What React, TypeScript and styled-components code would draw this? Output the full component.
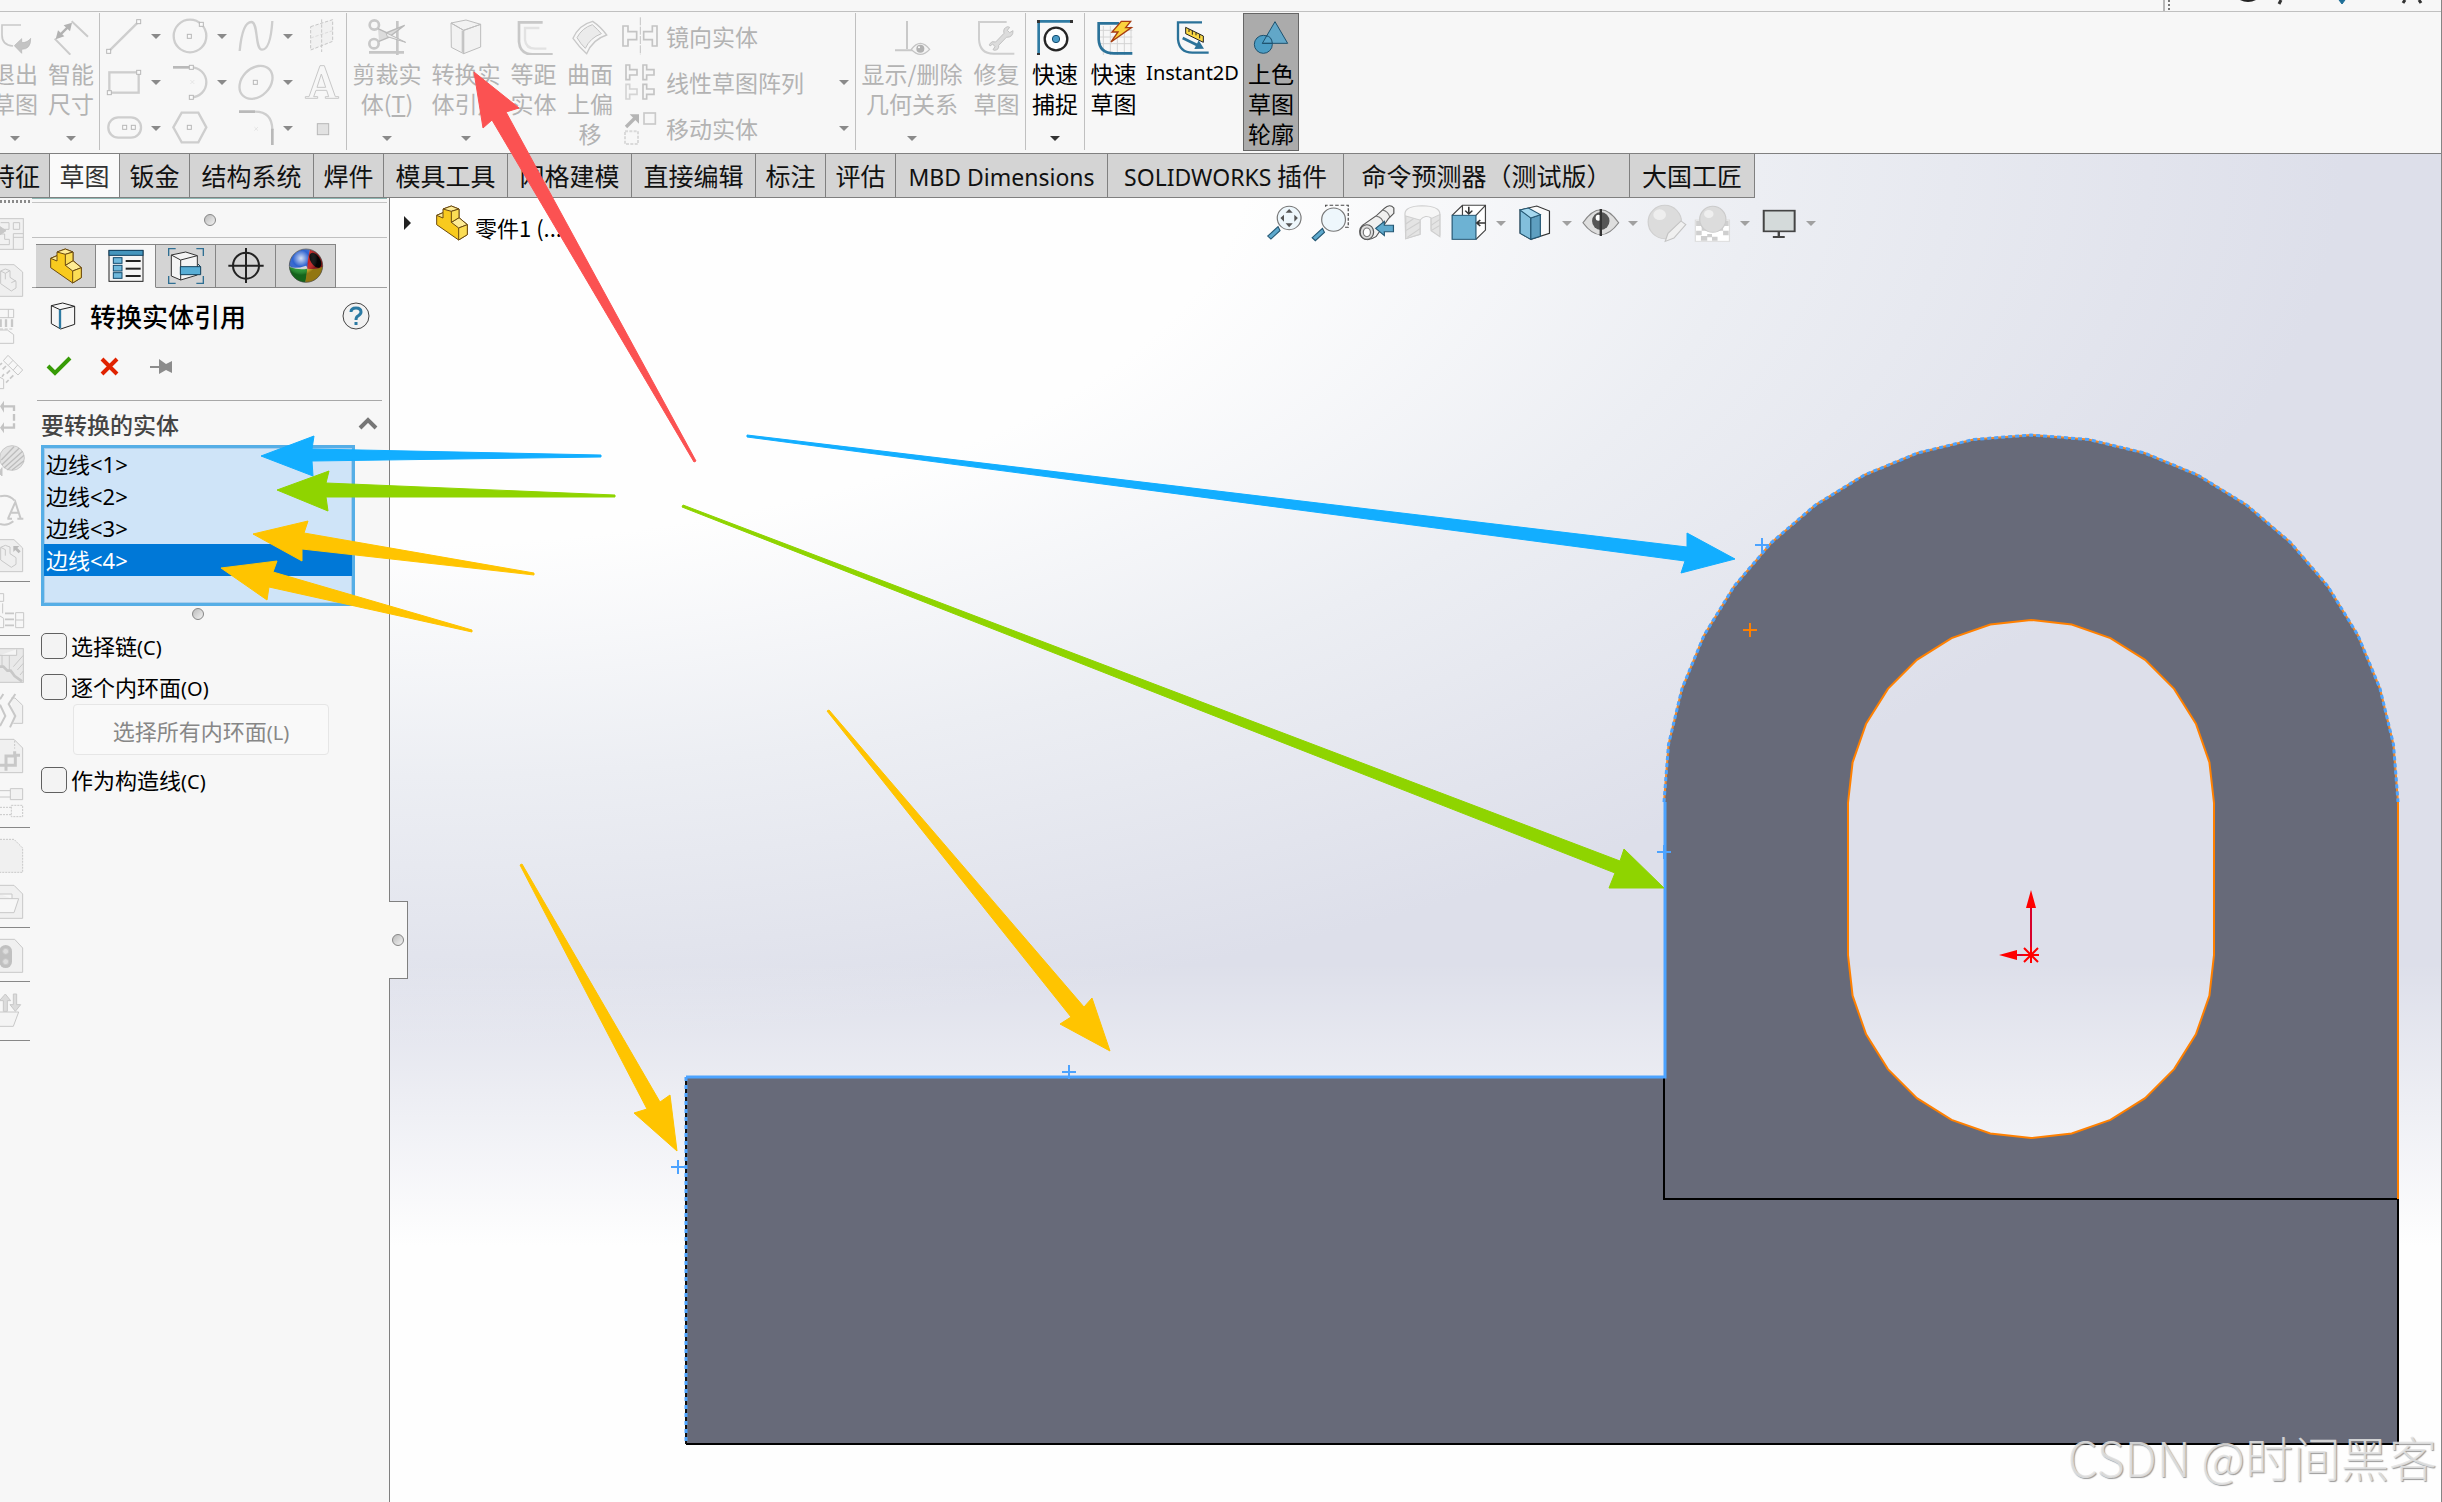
import React from "react";
import styled, { createGlobalStyle, css } from "styled-components";

const sans = `"Noto Sans", "Noto Sans CJK SC", sans-serif`;
const cjk = `"Noto Sans CJK SC", sans-serif`;

const Global = createGlobalStyle`
  *, *::before, *::after { box-sizing: border-box; }
  body { margin: 0; background: #f7f7f7; font-family: ${cjk}; font-size: 22px; color: #000; }
  button { font: inherit; color: inherit; border: 0; padding: 0; background: none; }
  svg { display: block; flex: none; }
`;

const Shell = styled.div`
  position: relative;
  display: flex;
  flex-direction: column;
  min-height: 100vh;
  overflow: hidden;
  border-right: 1px solid #858585;
`;

const TopStrip = styled.div`
  display: flex;
  justify-content: flex-end;
  height: 12px;
  border-bottom: 1px solid #c0c0c0;
`;

const Ribbon = styled.div`
  display: flex;
  height: 142px;
  padding: 1px 0 3px;
  border-bottom: 1px solid #808080;
`;

const Group = styled.div<{ $w?: number; $end?: boolean }>`
  display: flex;
  flex: none;
  ${(p) => p.$w && `width: ${p.$w}px;`}
  ${(p) => p.$end && "justify-content: flex-end;"}
  border-right: 1px solid #c0c0c0;
  &:last-child { border-right: 0; }
`;

const BigButton = styled.button<{ $w: number; $off?: boolean; $on?: boolean }>`
  display: flex;
  flex: none;
  flex-direction: column;
  align-items: center;
  width: ${(p) => p.$w}px;
  height: 138px;
  padding-top: 6px;
  font-size: 23px;
  line-height: 30px;
  color: ${(p) => (p.$off ? "#b3b3b3" : "#000")};
  ${(p) => p.$on && css`background: #ababab; box-shadow: inset 0 0 0 1px #666;`}
`;

const BigLabel = styled.span`
  display: flex;
  flex-direction: column;
  align-items: center;
  margin-top: 3px;
  white-space: nowrap;
`;

const Latin = styled.span<{ $s: number }>`
  font-family: ${sans};
  font-size: ${(p) => p.$s}px;
`;

const Tri = styled.span<{ $c?: string }>`
  flex: none;
  width: 0;
  height: 0;
  border: 5px solid transparent;
  border-top-color: ${(p) => p.$c || "#8a8a8a"};
  border-bottom: 0;
`;

const PushDown = styled.span`
  display: flex;
  margin: auto 0 10px;
`;

const ToolGrid = styled.div`
  display: grid;
  grid-template-columns: 66px 66px 66px 46px;
  grid-auto-rows: 46px;
`;

const ToolCell = styled.button`
  display: flex;
  align-items: center;
  gap: 5px;
`;

const RowList = styled.div`
  display: flex;
  flex: 1;
  flex-direction: column;
`;

const RowButton = styled.button`
  display: flex;
  align-items: center;
  height: 46px;
  padding-right: 6px;
  font-size: 23px;
  color: #b3b3b3;
`;
const RowText = styled.span`
  margin: 0 auto 0 2px;
  white-space: nowrap;
`;

const Workspace = styled.div`
  position: relative;
  display: flex;
  flex: 1;
  flex-direction: column;
  background:
    linear-gradient(to bottom, rgba(255, 255, 255, 0) 60%, #fefefe 81%),
    radial-gradient(ellipse 80% 66% at 16% 0, #fefefe 44%, #eceef3 70%, #dddfea 100%);
`;

const TabBar = styled.div`
  position: relative;
  display: flex;
  height: 44px;
`;

const Tab = styled.button<{ $w: number; $on?: boolean }>`
  flex: none;
  width: ${(p) => p.$w}px;
  font-size: 25px;
  line-height: 43px;
  white-space: nowrap;
  color: ${(p) => (p.$on ? "#333" : "#111")};
  background: ${(p) => (p.$on ? "#fafafa" : "#d4d4d4")};
  border-right: 1px solid #808080;
  border-bottom: 1px solid #808080;
  &:first-child { display: flex; justify-content: flex-end; padding-right: 9px; overflow: hidden; }
`;

const Body = styled.div`
  position: relative;
  display: flex;
  flex: 1;
`;

const Strip = styled.div`
  flex: none;
  width: 32px;
  background: #f7f7f7;
`;
const StripHandle = styled.div`
  height: 14px;
  padding-top: 2px;
  &::before {
    content: "";
    display: block;
    width: 30px;
    height: 3px;
    background: repeating-linear-gradient(90deg, #8a8a8a 0 2px, transparent 2px 4px);
  }
`;
const StripButton = styled.button`
  display: block;
  height: 46px;
`;
const StripRule = styled.hr<{ $top?: number }>`
  width: 30px;
  height: 1px;
  margin: ${(p) => p.$top || 1}px 0 6px;
  border: 0;
  background: #888;
`;

const Panel = styled.aside`
  position: relative;
  flex: none;
  width: 358px;
  background: #f7f7f7;
  border-right: 1px solid #808080;
`;

const Grip = styled.div`
  display: flex;
  flex-direction: column;
  align-items: center;
  height: 40px;
  margin-right: 2px;
  border-top: 1px solid #8fb8b4;
  border-bottom: 1px solid #c0c0c0;
  &::before {
    content: "";
    width: 100%;
    margin: 3px 0 11px;
    border-top: 1px solid #c4c4c4;
  }
`;

const Ball = styled.span`
  flex: none;
  width: 12px;
  height: 12px;
  border: 1px solid #858585;
  border-radius: 50%;
  background: linear-gradient(135deg, #bbb, #f2f2f2);
`;

const PanelTabs = styled.div`
  display: flex;
  height: 44px;
  margin: 6px 2px 0 0;
  &::before { content: ""; width: 4px; border-bottom: 1px solid #a0a0a0; }
  &::after { content: ""; flex: 1; border-bottom: 1px solid #a0a0a0; }
`;
const PanelTab = styled.button<{ $on?: boolean }>`
  display: flex;
  justify-content: center;
  align-items: center;
  width: 60px;
  background: ${(p) => (p.$on ? "#f7f7f7" : "#d4d4d4")};
  border: 1px solid #858585;
  border-left: 0;
  ${(p) => p.$on && "border-bottom-color: #f7f7f7;"}
`;

const TitleRow = styled.header`
  display: flex;
  align-items: center;
  height: 56px;
  padding: 0 19px 0 18px;
`;
const Title = styled.h2`
  flex: 1;
  margin: 0 0 0 13px;
  font-size: 26px;
  font-weight: 500;
  line-height: 40px;
`;

const Actions = styled.div`
  display: flex;
  gap: 21px;
  height: 46px;
  padding-left: 12px;
  align-items: center;
`;

const Rule = styled.hr`
  height: 1px;
  margin: 10px 7px 0 5px;
  border: 0;
  background: #a8a8a8;
`;

const SectionHead = styled.button`
  display: flex;
  justify-content: space-between;
  align-items: center;
  width: 100%;
  height: 44px;
  padding: 1px 11px 0 9px;
  font-size: 23px;
  font-weight: 500;
  color: #444;
`;

const List = styled.ul`
  min-height: 161px;
  margin: 0 34px 0 9px;
  padding: 0;
  list-style: none;
  background: #cfe4f8;
  border: 3px solid #56aee6;
  box-shadow: inset 0 0 0 1px #a7cdec;
`;
const Item = styled.li<{ $on?: boolean }>`
  height: 32px;
  padding-left: 2px;
  font-family: ${sans};
  line-height: 32px;
  ${(p) => p.$on && "background: #0078d7; color: #fff;"}
`;

const BallRow = styled.div`
  display: flex;
  justify-content: center;
  align-items: center;
  height: 16px;
  margin: 0 34px 11px 9px;
`;

const Check = styled.label`
  display: flex;
  align-items: center;
  gap: 4px;
  height: 26px;
  margin: 0 0 15px 9px;
  line-height: 26px;
  white-space: nowrap;
`;
const Box = styled.input`
  appearance: none;
  width: 26px;
  height: 26px;
  margin: 0;
  border: 1px solid #606060;
  border-radius: 5px;
  background: #f3f3f3;
`;
const LoopButton = styled.button`
  display: block;
  width: 256px;
  height: 51px;
  margin: -11px 0 12px 41px;
  color: #878787;
  background: #f9f9f9;
  border: 1px solid #e6e6e6;
  border-radius: 4px;
`;

const Collapse = styled.button`
  position: absolute;
  top: 703px;
  left: 357px;
  display: flex;
  justify-content: center;
  align-items: center;
  width: 19px;
  height: 78px;
  background: #f7f7f7;
  border: 1px solid #808080;
  border-left: 0;
`;

const Viewport = styled.main`
  flex: 1;
  min-width: 0;
`;
const ViewBar = styled.div`
  display: grid;
  grid-template-columns: 871px 1fr;
  height: 50px;
`;
const Tree = styled.button`
  display: flex;
  align-items: center;
  padding-left: 14px;
  font-size: 22px;
  white-space: pre;
  & > svg:nth-child(2) { margin: 0 5px 0 22px; }
`;
const TreeText = styled.span`
  padding-top: 8px;
`;
const HeadsUp = styled.div`
  display: flex;
  align-items: center;
`;
const HeadsButton = styled.button`
  display: flex;
  align-items: center;
  height: 46px;
`;
const HeadsTri = styled.span`
  display: flex;
  justify-content: center;
  width: 20px;
`;

const ModelLayer = styled.svg`
  position: absolute;
  inset: 0;
  width: 100%;
  height: 100%;
  pointer-events: none;
`;
const MarkLayer = styled.svg`
  position: absolute;
  inset: 0;
  width: 100%;
  height: 100%;
  pointer-events: none;
`;

const Watermark = styled.div`
  position: absolute;
  right: 4px;
  bottom: 11px;
  font-size: 48px;
  font-weight: 300;
  line-height: 70px;
  white-space: nowrap;
  color: rgba(228, 228, 228, 0.85);
  text-shadow: 1px 1px 1px rgba(130, 130, 130, 0.8);
`;

/* ---------- ribbon drawings ---------- */

type P = { children: React.ReactNode };
const Big = ({ x, children }: P & { x: number }) => (
  <svg width="40" height="36" viewBox={`${x} 57 120 108`} fill="none" stroke="#cbcbcb" strokeWidth="7">
    {children}
  </svg>
);
const Cell = ({ x, y, children }: P & { x: number; y: number }) => (
  <svg width="46" height="46" viewBox={`${x} ${y} 138 138`} fill="none" stroke="#cecece" strokeWidth="7">
    {children}
  </svg>
);
const Dot = ({ x, y }: { x: number; y: number }) => (
  <rect x={x - 6} y={y - 6} width="12" height="12" fill="#fafafa" stroke="#b8b8b8" strokeWidth="3" />
);
const Lines = ({ of }: { of: React.ReactNode[] }) => (
  <BigLabel>
    {of.map((line, i) => (
      <span key={i}>{line}</span>
    ))}
  </BigLabel>
);

const sketchTools: { name: string; tri: boolean; art: React.ReactNode }[] = [
  { name: "直线", tri: true, art: <><path d="M326 154L416 65" /><Dot x={326} y={154} /><Dot x={416} y={65} /></> },
  { name: "圆", tri: true, art: <><circle cx="570" cy="108" r="49" /><Dot x={568} y={109} /><Dot x={604} y={73} /></> },
  { name: "样条曲线", tri: true, art: <path d="M719 153C724 100 734 66 754 66C776 66 764 149 786 149C806 149 814 110 817 63" /> },
  {
    name: "基准面", tri: false,
    art: <g stroke="#c6c6c6" strokeWidth="3" strokeDasharray="10 5"><path d="M932 80L998 59V124L932 150Z" fill="#f1f1f1" /><path d="M932 114L998 92" stroke="#dcdcdc" /><path d="M965 58V156" /></g>,
  },
  { name: "矩形", tri: true, art: <><rect x="328" y="217" width="88" height="61" /><Dot x={328} y={278} /><Dot x={416} y={217} /></> },
  {
    name: "圆弧", tri: true,
    art: <><path d="M519 202H574" stroke="#b9b9b9" strokeWidth="8" /><path d="M574 202A45 45 0 0 1 574 292" /><Dot x={574} y={202} /><Dot x={574} y={292} /><path d="M571 240l12 12m0-12l-12 12" stroke="#dcdcdc" strokeWidth="2" /></>,
  },
  { name: "椭圆", tri: true, art: <><ellipse cx="768" cy="247" rx="56" ry="42" transform="rotate(-45 768 247)" /><Dot x={766} y={247} /></> },
  {
    name: "文字", tri: false,
    art: <path d="M960 197H973L1006 290H1016V295H976V290H986L980 271H948L941 290H953V295H916V290H927ZM964 222L951 262H977Z" stroke="#c8c8c8" strokeWidth="3" />,
  },
  { name: "槽口", tri: true, art: <><rect x="325" y="352" width="98" height="61" rx="30" /><Dot x={374} y={382} /><Dot x={400} y={382} /></> },
  { name: "多边形", tri: false, art: <><path d="M545 338H595L619 382L595 427H545L520 382Z" /><Dot x={568} y={382} /></> },
  {
    name: "圆角", tri: true,
    art: <><path d="M765 335C798 335 817 352 817 390" /><path d="M717 335H765M817 386V435" stroke="#b9b9b9" strokeWidth="8" /><path d="M763 381l11 11m0-11l-11 11" stroke="#dcdcdc" strokeWidth="2" /></>,
  },
  { name: "点", tri: false, art: <rect x="952" y="371" width="34" height="33" fill="#e2e2e2" stroke="#b8b8b8" strokeWidth="3" /> },
];

const rowTools = [
  {
    label: "镜向实体", tri: false,
    art: <g stroke="#c4c4c4" strokeWidth="5"><path d="M849 78H864V95H890V119H864V138H849ZM951 78H937V95H911V119H937V138H951Z" /><path d="M901 52V165" strokeWidth="3" strokeDasharray="24 4" /></g>,
  },
  {
    label: "线性草图阵列", tri: true,
    art: <g strokeWidth="5">{[[858, 195, "#c4c4c4"], [909, 195, "#c4c4c4"], [858, 253, "#d4d4d4"], [909, 253, "#c4c4c4"]].map(([x, y, c]) => (
      <path key={`${x}${y}`} stroke={c as string} d={`M${x} ${y}h11v14h22v16h-22v14h-11z`} />))}</g>,
  },
  {
    label: "移动实体", tri: true,
    art: <><path d="M858 381L885 354" stroke="#b5b5b5" strokeWidth="10" /><path d="M869 343H897V371Z" fill="#b5b5b5" stroke="none" /><rect x="912" y="339" width="34" height="33" stroke="#cacaca" strokeWidth="5" /><rect x="855" y="394" width="39" height="38" stroke="#dadada" strokeWidth="6" strokeDasharray="9 4" /></>,
  },
];

const iconExit = <Big x={-18}><path d="M60 75H3V105Q3 136 36 138" stroke="#c9c9c9" strokeWidth="5" /><path d="M40 137L62 116V128Q80 128 89 115Q90 148 62 148V160Z" fill="#c4c4c4" stroke="#b5b5b5" strokeWidth="2" /></Big>;
const iconSmart = <Big x={150}><path d="M212 64L261 110M161 116L208 164" strokeWidth="6" /><path d="M172 110L205 77" stroke="#b2b2b2" strokeWidth="7" /><path d="M213 68L207 94L188 76ZM164 118L171 91L190 109Z" fill="#b2b2b2" stroke="none" /></Big>;
const iconTrim = <Big x={81}><path d="M87 157H192M172 63V168" stroke="#c6c6c6" strokeWidth="8" /><circle cx="103" cy="75" r="14" strokeWidth="8" stroke="#c8c8c8" /><circle cx="102" cy="131" r="14" strokeWidth="8" stroke="#c8c8c8" /><path d="M114 86L140 98L194 76L146 112L117 124" stroke="#b9b9b9" strokeWidth="4" fill="#dcdcdc" /><path d="M138 98L197 127L142 110Z" fill="#eee" stroke="#b9b9b9" strokeWidth="3" /></Big>;
const iconConvert = <Big x={318}><path d="M333 69L378 60L422 73L371 91ZM333 69L371 91V161L334 142ZM371 91L422 73V141L371 161Z" fill="#f2f2f2" stroke="#bdbdbd" strokeWidth="3" /><path d="M368 92V158" stroke="#c6c6c6" strokeWidth="6" /></Big>;
const iconOffset = <Big x={520}><path d="M606 67H535V125Q538 163 575 163H636" strokeWidth="8" stroke="#c8c8c8" /><path d="M596 84H553V120Q556 146 584 146H617" strokeWidth="7" stroke="#e2e2e2" /></Big>;
const iconSurface = <Big x={690}><path d="M699 115Q717 74 758 64Q782 80 800 105Q758 118 740 161Q718 142 699 115Z" stroke="#c8c8c8" strokeWidth="4" /><path d="M711 113Q726 84 757 74Q773 88 784 101Q750 114 736 145Q722 132 711 113Z" fill="#ebebeb" stroke="#c2c2c2" strokeWidth="3" /></Big>;
const iconRelations = <Big x={126}><path d="M171 63V147M135 151H190" stroke="#c9c9c9" strokeWidth="6" /><path d="M184 148Q211 112 239 148Q211 178 184 148Z" fill="#f4f4f4" stroke="#c4c4c4" strokeWidth="4" /><circle cx="211" cy="146" r="12" fill="#b2b2b2" stroke="none" /><circle cx="207" cy="142" r="3" fill="#fff" stroke="none" /></Big>;
const iconRepair = <Big x={380}><path d="M469 66H386V118Q388 161 430 161H492" strokeWidth="6" stroke="#cfcfcf" /><path d="M417 133Q424 121 436 126L461 100Q457 84 472 80L478 82L471 91L478 98L488 92Q489 112 468 112L445 136Q447 149 433 151L428 149L434 140L427 132L419 138Z" fill="#dcdcdc" stroke="#c2c2c2" strokeWidth="3" /></Big>;
const iconSnap = <Big x={555}><path d="M561 64H662M566 68V160" stroke="#2f7ba3" strokeWidth="8" /><path d="M561 60h9v9h-9zM660 60h9v9h-9zM561 159h9v8h-9z" fill="#333" stroke="none" /><circle cx="618" cy="117" r="34" stroke="#262626" fill="#fff" /><circle cx="618" cy="117" r="11" fill="#4b9cc7" stroke="#174e70" strokeWidth="3" /></Big>;
const iconQuick = <Big x={730}><path d="M758 78V165M779 78V165M800 78V165M821 78V165M841 78V165M742 91H845M742 111H845M742 131H845" stroke="#d4d4d4" strokeWidth="3" /><path d="M805 70H744V118Q746 160 790 160H845" stroke="#2b7299" strokeWidth="8" /><path d="M812 64H840L825 83H842L781 126L802 96H784Z" fill="#fbd23d" stroke="#a63c10" strokeWidth="4" /></Big>;
const iconInstant = <Big x={966}><path d="M1053 67H981V118Q985 157 1024 158H1073" stroke="#2b7299" strokeWidth="7" /><path d="M1004 82L1057 108V127L1004 101Z" fill="#fbd943" stroke="#222" strokeWidth="3" /><path d="M1014 88V96M1024 92V104M1035 98V106M1046 103V115" stroke="#222" strokeWidth="3" /><path d="M995 114L1038 135" stroke="#2b7299" strokeWidth="8" /><path d="M1043 121L1059 146L1030 147Z" fill="#2b7299" stroke="none" /></Big>;
const iconShaded = <Big x={1203}><circle cx="1240" cy="133" r="27" fill="#4c9dc4" stroke="#1d516e" strokeWidth="3" /><path d="M1275 65L1313 130H1237Z" fill="#5aa6cb" fillOpacity=".9" stroke="#1d516e" strokeWidth="3" /><path d="M1237 130H1267Q1265 108 1247 107" stroke="#1d516e" strokeWidth="3" /></Big>;

/* ---------- side strip drawings ---------- */

const StripIcon = ({ y, children }: P & { y: number }) => (
  <StripButton aria-label="工具">
    <svg width="30" height="46" viewBox={`0 ${y} 90 138`} fill="none" stroke="#c8c8c8" strokeWidth="3">{children}</svg>
  </StripButton>
);
const stepPart = "l14 -6l14 5v20l18 12v20l-14 9l-32 -22z";

function SideStrip() {
  return (
    <Strip>
      <StripHandle />
      <StripIcon y={66}><rect x="-20" y="86" width="90" height="92" fill="#f1f1f1" /><path d="M2 98H27V118H2M40 98H59V118H40ZM40 178V131H70M40 142H70M0 132H14V148H28V164H0" /><path d="M0 110L18 122L0 134Z" fill="#c8c8c8" /></StripIcon>
      <StripIcon y={204}><path d="M0 224H42L68 246V319H0" fill="#efefef" /><path d={`M2 243${stepPart}M2 243l14 7v18M16 250l14 -8M34 278l14 -6`} /></StripIcon>
      <StripIcon y={342}><path d="M0 358H41V383H0M25 358V383M0 420H22L41 434V460H0" /><path d="M2 388V411M18 388V411M36 388V411" strokeWidth="7" /><path d="M0 417H41" strokeDasharray="9 5" /></StripIcon>
      <StripIcon y={480}><path d="M24 496L68 540L54 555L10 512ZM39 511L25 526M53 525L40 540M0 562L11 568V596H0" /><path d="M0 525L6 519M8 538L18 528M20 551L30 541M30 566L40 556M6 560L12 552M18 578L26 570" strokeWidth="5" /></StripIcon>
      <StripIcon y={618}><path d="M8 649H42V663M42 672V692M42 700V713H8" strokeWidth="7" stroke="#c4c4c4" /><path d="M0 649L12 632V668ZM0 713L12 697V730Z" fill="#c4c4c4" stroke="none" /></StripIcon>
      <StripIcon y={126}><circle cx="36" cy="174" r="37" fill="#e2e2e2" /><path d="M4 180L42 140M6 194L58 144M12 204L68 154M22 210L72 166M36 210L72 182" stroke="#bdbdbd" strokeWidth="4" /><path d="M0 212L6 203V228L0 222Z" fill="#c4c4c4" /></StripIcon>
      <StripIcon y={264}><path d="M0 289A43 43 0 0 1 44 302M0 372A43 43 0 0 0 40 364" strokeWidth="6" /><path d="M22 356H36M24 356L46 306L62 356M52 356H70M32 338H56" strokeWidth="6" /></StripIcon>
      <StripIcon y={402}><path d="M0 419H42L68 444V515H0" fill="#efefef" /><path d={`M2 442${stepPart}M2 442l14 7v18`} /><path d="M40 438H58L52 444L62 454L56 460L46 450L40 456Z" fill="#bbb" stroke="none" /></StripIcon>
      <StripRule />
      <StripIcon y={564}><path d="M0 581H11V604H0M8 610V640" /><path d="M15 640H42M15 658H42M15 676H42" strokeWidth="5" /><path d="M47 638H71V683H47ZM47 660H71M0 648L11 655V683H0" /></StripIcon>
      <StripRule />
      <StripIcon y={66}><rect x="-20" y="86" width="90" height="101" fill="#e9e9e9" /><path d="M0 106H50V88M6 106V142M28 106V150" fill="#f5f5f5" /><path d="M0 140H10L22 152H32L44 168L66 184" strokeWidth="8" /><path d="M40 140L70 106M52 150L70 130M60 165L70 153" /></StripIcon>
      <StripIcon y={204}><path d="M34 234L45 234L68 256V310H40" fill="#f1f1f1" /><path d="M0 238L10 222M0 254L16 288L0 318M46 222L26 252L46 288L30 322" strokeWidth="6" /></StripIcon>
      <StripIcon y={342}><path d="M0 358H42L68 384V458H0" fill="#f0f0f0" /><path d="M0 436H46V406H60M18 452V408H44V394M18 436V452" strokeWidth="9" /><path d="M44 362V386" strokeDasharray="6 4" /></StripIcon>
      <StripIcon y={480}><path d="M31 506H68V539H31ZM0 512H31M0 531H31" fill="#f2f2f2" /><path d="M34 556H68V590H34ZM0 562H34M0 584H34" strokeDasharray="6 3" /></StripIcon>
      <StripRule />
      <StripIcon y={642}><path d="M0 658H42L68 684V757H0" fill="#f0f0f0" strokeDasharray="6 3" /></StripIcon>
      <StripIcon y={780}><path d="M0 796H42L68 822V895H0" fill="#f0f0f0" /><path d="M0 822H36V836M0 836H56L42 878H0" fill="#f7f7f7" /></StripIcon>
      <StripRule />
      <StripIcon y={942}><path d="M0 958H44L68 984V1057H0" fill="#f0f0f0" /><rect x="-2" y="975" width="38" height="69" rx="19" fill="#c0c0c0" stroke="none" /><circle cx="17" cy="994" r="9" fill="#ddd" /><circle cx="17" cy="1025" r="9" fill="#ddd" /></StripIcon>
      <StripRule />
      <StripIcon y={1104}><path d="M0 1140L16 1122L32 1142H22V1174H10V1142H0M40 1122H50V1154H62L46 1174L30 1154H40Z" fill="#dcdcdc" /><path d="M0 1176H56L40 1219H0" fill="#f4f4f4" /></StripIcon>
      <StripRule $top={6} />
    </Strip>
  );
}

/* ---------- panel drawings ---------- */

const PartIcon = () => (
  <svg width="36" height="36" viewBox="145 174 108 108" stroke="#6b4a12" strokeWidth="3" strokeLinejoin="round">
    <path d="M153 205L172 197V186L197 177L220 186V212L245 233V263L219 279L153 233Z" fill="#f8ca1e" />
    <path d="M172 186L197 177L220 186L197 193Z M197 226L220 212L245 233L219 243Z M153 205L172 197V213Z" fill="#fdeb94" />
    <path d="M197 193L220 186V212L197 226ZM219 243L245 233V263L219 279Z" fill="#fbdd55" />
  </svg>
);
const PropIcon = () => (
  <svg width="36" height="36" viewBox="322 174 108 108">
    <rect x="325" y="182" width="102" height="92" fill="#f4f4f4" stroke="#222" strokeWidth="3" />
    <rect x="325" y="181" width="102" height="15" fill="#4495bd" stroke="#0f3f5f" strokeWidth="3" />
    {[203, 226, 248].map((y) => (
      <g key={y}><rect x="338" y={y} width="26" height="17" fill="#6fb8db" stroke="#124a6d" strokeWidth="3" /><path d={`M375 ${y + 10}H420`} stroke="#222" strokeWidth="6" /></g>
    ))}
  </svg>
);
const ConfigIcon = () => (
  <svg width="36" height="36" viewBox="504 174 108 108" fill="none" stroke="#2f6f93" strokeWidth="4">
    <path d="M506 198V176H527M589 176H610V198M506 258V280H527M589 280H610V258" />
    <path d="M514 195L557 186L592 197V255L542 270L514 258Z" fill="#f4f4f4" stroke="#333" strokeWidth="3" />
    <path d="M514 195L542 210L592 197M542 210V270" stroke="#333" strokeWidth="3" />
    <path d="M541 230H602V254H541ZM594 222L602 230" fill="#58aed6" stroke="#11405c" strokeWidth="3" />
  </svg>
);
const TargetIcon = () => (
  <svg width="36" height="36" viewBox="684 174 108 108" fill="none" stroke="#222" strokeWidth="6">
    <circle cx="738" cy="227" r="39" /><path d="M738 174V279M685 227H791" />
  </svg>
);
const AppearIcon = () => (
  <svg width="36" height="36" viewBox="865 174 108 108">
    <defs><radialGradient id="sphere" cx="35%" cy="28%"><stop offset="0" stopColor="#fff" stopOpacity=".8" /><stop offset=".5" stopColor="#fff" stopOpacity="0" /><stop offset="1" stopColor="#000" stopOpacity=".35" /></radialGradient></defs>
    <path d="M919 227Q880 240 869 227A50 50 0 0 1 931 179Q925 205 925 235Z" fill="#2d62cf" />
    <path d="M869 231Q900 242 923 236Q922 260 917 277A50 50 0 0 1 869 231Z" fill="#1e9a2a" />
    <path d="M923 236Q950 240 969 228A50 50 0 0 1 917 277Z" fill="#e0b51a" />
    <path d="M931 179A50 50 0 0 1 969 230Q950 240 923 236Q923 205 931 179Z" fill="#c81e1e" />
    <ellipse cx="947" cy="211" rx="14" ry="25" transform="rotate(-32 947 211)" fill="#080808" />
    <circle cx="919" cy="227" r="50" fill="url(#sphere)" stroke="#444" strokeWidth="2" />
  </svg>
);

/* ---------- view toolbar ---------- */

const Lens = ({ cx, cy }: { cx: number; cy: number }) => (
  <>
    <path d={`M${cx - 28} ${cy + 26}L${cx - 54} ${cy + 54}L${cx - 46} ${cy + 63}L${cx - 23} ${cy + 38}Z`} fill="#5ea9cd" stroke="#245773" />
    <ellipse cx={cx} cy={cy} rx="30" ry="35" fill="#eef7fc" stroke="#777" />
  </>
);
const viewTools: { name: string; tri: boolean; art: React.ReactNode }[] = [
  { name: "整屏显示全图", tri: false, art: <><Lens cx={126} cy={234} /><path d="M126 207L135 218H117ZM126 262L135 250H117ZM104 234L113 224V245ZM148 234L139 224V245Z" fill="#555" stroke="none" /></> },
  { name: "局部放大", tri: false, art: <><path d="M218 200V196H275V262H266" stroke="#444" strokeDasharray="9 5" /><Lens cx={238} cy={239} /></> },
  { name: "上一视图", tri: false, art: <><path d="M366 205Q380 190 390 204V220L377 235L345 290Q318 310 305 285Q300 260 318 250L345 228Z" fill="#f0f0f0" stroke="#555" /><path d="M345 228Q362 232 364 252M362 210Q376 214 380 232" stroke="#777" /><ellipse cx="322" cy="276" rx="17" ry="22" fill="#ddd" stroke="#555" /><ellipse cx="322" cy="277" rx="9" ry="13" fill="#fff" stroke="#777" /><path d="M344 265L366 244V256H389V275H366V287Z" fill="#5ea9cd" stroke="#245773" /></> },
  { name: "剖面视图", tri: false, art: <g stroke="#cfcfcf"><path d="M418 222Q418 198 461 197Q506 198 506 222V284L484 268V234Q470 222 456 240V283L420 296Z" fill="#f6f6f6" /><path d="M420 228L456 240V283L420 296ZM484 236L506 224V290L484 272Z" fill="#e4e4e4" /><path d="M420 252L440 236M420 272L456 246M424 292L456 266M484 256L506 238M484 272L506 256" /></g> },
  { name: "视图定向", tri: true, art: <><path d="M537 226L563 196H621V270L597 298M563 196V226M597 226L621 196" stroke="#444" fill="#fff" /><rect x="537" y="226" width="60" height="72" fill="#6db2d3" stroke="#245773" /><path d="M579 200V218M570 212L579 222L588 212M620 249H602M608 240L599 249L608 258" stroke="#333" strokeWidth="4" /></> },
  { name: "显示样式", tri: true, art: <><path d="M709 210L751 198L783 213V280L736 298L709 280Z" fill="#fafafa" stroke="#333" /><path d="M709 210L736 234V298L709 280Z" fill="#82bfdc" stroke="#245773" /><path d="M736 234L760 224V289L736 298Z" fill="#5e9fc0" stroke="#245773" /><path d="M709 210L730 204L760 224L736 234Z" fill="#a5d8ef" stroke="#245773" /></> },
  { name: "隐藏/显示项目", tri: true, art: <><path d="M868 248Q913 170 958 248Q913 320 868 248Z" fill="#dedede" stroke="#888" /><ellipse cx="913" cy="243" rx="22" ry="27" fill="#555" stroke="none" /><ellipse cx="907" cy="233" rx="7" ry="9" fill="#fff" stroke="none" /><path d="M913 207V288" stroke="#333" strokeWidth="6" /></> },
  { name: "编辑外观", tri: false, art: <><ellipse cx="1075" cy="246" rx="42" ry="50" fill="#dcdcdc" stroke="#cfcfcf" /><ellipse cx="1062" cy="224" rx="16" ry="16" fill="#eee" stroke="none" /><path d="M1116 243L1128 254L1098 294L1076 304L1083 280Z" fill="#f0f0f0" stroke="#c4c4c4" /></> },
  { name: "应用布景", tri: true, art: <><rect x="1152" y="240" width="86" height="64" fill="#fff" stroke="#ddd" /><path d="M1154 242h14v16h-14zM1222 242h14v16h-14zM1168 258h12v14h-12zM1208 258h14v14h-14zM1154 272h14v14h-14zM1182 282h12v10h-12zM1222 272h14v14h-14zM1166 288h16v14h-16zM1194 290h14v12h-14z" fill="#cfcfcf" stroke="none" /><ellipse cx="1196" cy="238" rx="33" ry="39" fill="#dcdcdc" stroke="#cbcbcb" /><ellipse cx="1186" cy="222" rx="12" ry="12" fill="#efefef" stroke="none" /></> },
  { name: "视图设定", tri: true, art: <><rect x="1325" y="212" width="78" height="62" fill="#d4dada" stroke="#444" strokeWidth="5" /><path d="M1363 276V290M1348 291H1378" stroke="#444" strokeWidth="6" /></> },
];

function ViewTools() {
  let x = 55;
  return (
    <HeadsUp>
      {viewTools.map((t) => {
        const at = x;
        x += t.tri ? 167 : 116;
        return (
          <HeadsButton key={t.name} aria-label={t.name}>
            <svg width="46" height="46" viewBox={`${at} 180 116 138`} preserveAspectRatio="none" fill="none" strokeWidth="3">{t.art}</svg>
            {t.tri && <HeadsTri><Tri $c="#a0a0a0" /></HeadsTri>}
          </HeadsButton>
        );
      })}
    </HeadsUp>
  );
}

/* ---------- model ---------- */

const fan = (cx: number, cy: number, r: number, from: number, to: number, n: number) =>
  Array.from({ length: n + 1 }, (_, i) => {
    const a = ((from + ((to - from) * i) / n) * Math.PI) / 180;
    return `${(cx + r * Math.cos(a)).toFixed(1)},${(cy + r * Math.sin(a)).toFixed(1)}`;
  }).join(" L");

const Plus = ({ x, y, c = "#4ca3ff" }: { x: number; y: number; c?: string }) => (
  <path d={`M${x - 7} ${y}H${x + 7}M${x} ${y - 7}V${y + 7}`} stroke={c} strokeWidth="2" />
);

function Model() {
  const arch = `M${fan(2031, 802, 367, 180, 360, 20)}`;
  const slot = `M${fan(2031, 803, 183, 180, 360, 14)} L${fan(2031, 955, 183, 0, 180, 14)} Z`;
  return (
    <ModelLayer aria-hidden="true" fill="none">
      <g transform="translate(0 -154)">
        <path d={`${arch} V1444 H686 V1077 H1664 Z ${slot}`} fill="#676a79" fillRule="evenodd" />
        <path d="M1664 1077V1199H2398V1444H686" stroke="#000" strokeWidth="2" />
        <path d="M2398 802V1199" stroke="#ff8000" strokeWidth="2" />
        <path d={slot} stroke="#ff8000" strokeWidth="2" />
        <path d={arch} stroke="#f08a2c" strokeWidth="2" />
        <path d={arch} stroke="#4ca3ff" strokeWidth="3" strokeDasharray="4 3" />
        <path d="M686 1077V1444" stroke="#111" strokeWidth="2" />
        <path d="M686 1077V1444" stroke="#4ca3ff" strokeWidth="3" strokeDasharray="4 4" />
        <path d="M686 1077H1665V802" stroke="#4ca3ff" strokeWidth="3" />
        <Plus x={1762} y={545} />
        <Plus x={1750} y={630} c="#ff8000" />
        <Plus x={1664} y={852} />
        <Plus x={1069} y={1072} />
        <Plus x={678} y={1167} />
        <path d="M2031 955V905M2031 955H2014" stroke="#d8002a" strokeWidth="2" />
        <path d="M2031 890L2036 908H2026ZM1999 955L2017 950V960Z" fill="#f00" />
        <path d="M2024 948L2038 962M2024 962L2038 948M2023 955H2039M2031 947V963" stroke="#f00" strokeWidth="2" />
      </g>
    </ModelLayer>
  );
}

const marks = [
  ["#fb5252", "474,72 519,108 506,112 696,461 694,462 492,120 483,128"],
  ["#12aeff", "261,456 314,436 312,449 601,455 601,457 312,461 313,476"],
  ["#8fd400", "277,490 329,471 326,483 615,495 615,497 326,497 328,511"],
  ["#ffc400", "253,534 308,521 304,533 534,573 534,575 302,549 302,561"],
  ["#ffc400", "221,568 277,561 273,572 472,630 472,632 269,587 267,600"],
  ["#12aeff", "1735,559 1687,533 1687,547 747,435 747,437 1685,561 1681,573"],
  ["#8fd400", "1664,888 1624,849 1620,861 683,505 682,507 1615,873 1609,888"],
  ["#ffc400", "1110,1051 1092,998 1084,1007 829,710 827,711 1071,1017 1060,1024"],
  ["#ffc400", "677,1151 670,1095 660,1102 522,864 520,865 647,1109 634,1113"],
];

const tabs: { label: string; latin?: string; w: number }[] = [
  { label: "特征", w: 50 },
  { label: "草图", w: 70 },
  { label: "钣金", w: 70 },
  { label: "结构系统", w: 124 },
  { label: "焊件", w: 70 },
  { label: "模具工具", w: 124 },
  { label: "网格建模", w: 124 },
  { label: "直接编辑", w: 124 },
  { label: "标注", w: 70 },
  { label: "评估", w: 70 },
  { label: "", latin: "MBD Dimensions", w: 212 },
  { label: " 插件", latin: "SOLIDWORKS", w: 236 },
  { label: "命令预测器（测试版）", w: 286 },
  { label: "大国工匠", w: 125 },
];

export default function App() {
  return (
    <Shell>
      <Global />
      <TopStrip>
        <svg width="278" height="11" viewBox="0 0 278 11" fill="none">
          <path d="M1 0V11" stroke="#777" strokeWidth="1" />
          <path d="M6 0V11" stroke="#777" strokeWidth="2" strokeDasharray="2 2" />
          <path d="M77 0Q85 4 93 0Z" fill="#222" />
          <path d="M118 0L116 4" stroke="#333" strokeWidth="3" />
          <path d="M176 0H182L179 4Z" fill="#1f6f97" stroke="#1f6f97" />
          <path d="M242 0L240 3M256 0L258 3" stroke="#333" strokeWidth="3" />
        </svg>
      </TopStrip>
      <Ribbon>
        <Group $w={100} $end>
          <BigButton $w={56} $off>{iconExit}<Lines of={["退出", "草图"]} /><PushDown><Tri /></PushDown></BigButton>
          <BigButton $w={56} $off>{iconSmart}<Lines of={["智能", "尺寸"]} /><PushDown><Tri /></PushDown></BigButton>
        </Group>
        <Group $w={247}>
          <ToolGrid>
            {sketchTools.map((t, i) => (
              <ToolCell key={t.name} aria-label={t.name}>
                <Cell x={300 + 198 * (i % 4)} y={39 + 138 * Math.floor(i / 4)}>{t.art}</Cell>
                {t.tri && <Tri />}
              </ToolCell>
            ))}
          </ToolGrid>
        </Group>
        <Group $w={509}>
          <BigButton $w={80} $off>{iconTrim}<Lines of={["剪裁实", <>体(<u>T</u>)</>]} /><PushDown><Tri /></PushDown></BigButton>
          <BigButton $w={78} $off>{iconConvert}<Lines of={["转换实", "体引用"]} /><PushDown><Tri /></PushDown></BigButton>
          <BigButton $w={57} $off>{iconOffset}<Lines of={["等距", "实体"]} /></BigButton>
          <BigButton $w={56} $off>{iconSurface}<Lines of={["曲面", "上偏", "移"]} /></BigButton>
          <RowList>
            {rowTools.map((t, i) => (
              <RowButton key={t.label}>
                <Cell x={834} y={39 + 138 * i}>{t.art}</Cell>
                <RowText>{t.label}</RowText>
                {t.tri && <Tri />}
              </RowButton>
            ))}
          </RowList>
        </Group>
        <Group $w={170}>
          <BigButton $w={112} $off>{iconRelations}<Lines of={["显示/删除", "几何关系"]} /><PushDown><Tri /></PushDown></BigButton>
          <BigButton $w={57} $off>{iconRepair}<Lines of={["修复", "草图"]} /></BigButton>
        </Group>
        <Group $w={59}>
          <BigButton $w={58}>{iconSnap}<Lines of={["快速", "捕捉"]} /><PushDown><Tri $c="#333" /></PushDown></BigButton>
        </Group>
        <Group>
          <BigButton $w={57}>{iconQuick}<Lines of={["快速", "草图"]} /></BigButton>
          <BigButton $w={101}>{iconInstant}<BigLabel><Latin $s={20}>Instant2D</Latin></BigLabel></BigButton>
          <BigButton $w={56} $on>{iconShaded}<Lines of={["上色", "草图", "轮廓"]} /></BigButton>
        </Group>
      </Ribbon>

      <Workspace>
        <Model />
        <TabBar>
          {tabs.map((t) => (
            <Tab key={t.label + t.latin} $w={t.w} $on={t.label === "草图"}>
              {t.latin && <Latin $s={23}>{t.latin}</Latin>}
              {t.label}
            </Tab>
          ))}
        </TabBar>
        <Body>
          <SideStrip />
          <Panel>
            <Grip><Ball /></Grip>
            <PanelTabs>
              <PanelTab aria-label="特征树"><PartIcon /></PanelTab>
              <PanelTab aria-label="属性" $on><PropIcon /></PanelTab>
              <PanelTab aria-label="配置"><ConfigIcon /></PanelTab>
              <PanelTab aria-label="尺寸专家"><TargetIcon /></PanelTab>
              <PanelTab aria-label="外观"><AppearIcon /></PanelTab>
            </PanelTabs>
            <TitleRow>
              <svg width="27" height="28" viewBox="150 335 81 84" stroke="#222" strokeWidth="3" fill="#f6f6f6">
                <path d="M154 346L188 338L224 348V402L182 416L154 400Z" /><path d="M154 346L180 358L224 348" fill="none" />
                <path d="M180 358V414" stroke="#2f7ba3" strokeWidth="7" />
              </svg>
              <Title>转换实体引用</Title>
              <button aria-label="帮助">
                <svg width="28" height="28" viewBox="0 0 28 28" fill="none">
                  <circle cx="14" cy="14" r="13" fill="#f2f2f2" stroke="#444" />
                  <path d="M9 10Q9 6 14 6Q19 6 19 10Q19 12 16 14Q14 15 14 18M14 20V23" stroke="#2b7aa3" strokeWidth="3" />
                </svg>
              </button>
            </TitleRow>
            <Actions>
              <button aria-label="确定"><svg width="30" height="24" viewBox="0 0 30 24"><path d="M4 11L11 18L26 3" fill="none" stroke="#379b06" strokeWidth="4" /></svg></button>
              <button aria-label="取消"><svg width="30" height="24" viewBox="0 0 30 24"><path d="M7 4L22 19M22 4L7 19" fill="none" stroke="#e02200" strokeWidth="4" /></svg></button>
              <button aria-label="保持可见"><svg width="30" height="24" viewBox="0 0 30 24"><path d="M4 11H13V4L20 9L26 6V18L20 15L13 19V13H4Z" fill="#8c8c8c" /></svg></button>
            </Actions>
            <Rule />
            <SectionHead>
              要转换的实体
              <svg width="20" height="14" viewBox="0 0 20 14"><path d="M2 11L10 3L18 11" fill="none" stroke="#777" strokeWidth="4" /></svg>
            </SectionHead>
            <List role="listbox" aria-label="要转换的实体">
              {[1, 2, 3, 4].map((n) => (
                <Item key={n} role="option" aria-selected={n === 4} $on={n === 4}>{`边线<${n}>`}</Item>
              ))}
            </List>
            <BallRow><Ball /></BallRow>
            <Check><Box type="checkbox" /><span>选择链<Latin $s={20}>(C)</Latin></span></Check>
            <Check><Box type="checkbox" /><span>逐个内环面<Latin $s={20}>(O)</Latin></span></Check>
            <LoopButton disabled>选择所有内环面<Latin $s={20}>(L)</Latin></LoopButton>
            <Check><Box type="checkbox" /><span>作为构造线<Latin $s={20}>(C)</Latin></span></Check>
            <Collapse aria-label="折叠面板"><Ball /></Collapse>
          </Panel>
          <Viewport>
            <ViewBar>
              <Tree>
                <svg width="8" height="14" viewBox="0 0 8 14"><path d="M0 0L7 7L0 14Z" fill="#222" /></svg>
                <PartIcon />
                <TreeText>{"零件1 (..."}</TreeText>
              </Tree>
              <ViewTools />
            </ViewBar>
          </Viewport>
        </Body>
      </Workspace>

      <MarkLayer aria-hidden="true">
        {marks.map(([c, pts]) => (
          <polygon key={pts} points={pts} fill={c} stroke={c} strokeWidth="1" strokeLinejoin="round" />
        ))}
      </MarkLayer>
      <Watermark>CSDN @时间黑客</Watermark>
    </Shell>
  );
}
